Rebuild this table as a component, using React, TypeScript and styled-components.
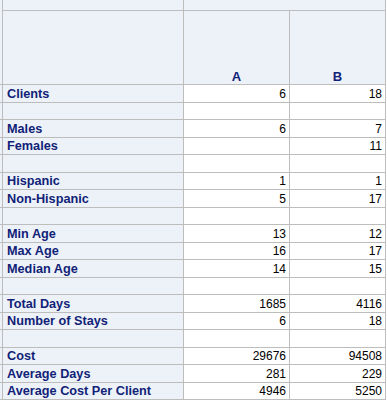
import React from 'react';
import styled, { createGlobalStyle } from 'styled-components';

const GlobalStyle = createGlobalStyle`
  html, body {
    margin: 0;
    padding: 0;
    background: #ffffff;
  }
  body {
    font-family: "Liberation Sans", Arial, sans-serif;
  }
`;

const Sheet = styled.div`
  display: grid;
  grid-template-columns: 2px 180px 105px 95px;
  grid-template-rows: 10px 73px repeat(18, 16.5px);
  gap: 1px;
  width: max-content;
  padding: 0 1px 1px 0;
  background: #bdbdbd;
`;

const Gutter = styled.div`
  background: #edf2f9;
`;

const Corner = styled.div`
  grid-row: 1 / span 2;
  background: #edf2f9;
`;

const SpanHeader = styled.div`
  grid-column: 3 / span 2;
  background: #edf2f9;
`;

const ColHeader = styled.div`
  display: flex;
  align-items: flex-end;
  justify-content: center;
  background: #edf2f9;
  color: #112277;
  font-size: 13px;
  font-weight: bold;
  line-height: 14px;
`;

const RowHeader = styled.div`
  display: flex;
  align-items: center;
  padding: 1px 0 0 4px;
  background: #edf2f9;
  color: #112277;
  font-size: 12.7px;
  font-weight: bold;
  white-space: nowrap;
`;

const Value = styled.div`
  display: flex;
  align-items: center;
  justify-content: flex-end;
  padding: 1px 3px 0 0;
  background: #ffffff;
  color: #000000;
  font-size: 12px;
`;

type Row = { label: string; a: string; b: string };

const rows: Row[] = [
  { label: 'Clients', a: '6', b: '18' },
  { label: '', a: '', b: '' },
  { label: 'Males', a: '6', b: '7' },
  { label: 'Females', a: '', b: '11' },
  { label: '', a: '', b: '' },
  { label: 'Hispanic', a: '1', b: '1' },
  { label: 'Non-Hispanic', a: '5', b: '17' },
  { label: '', a: '', b: '' },
  { label: 'Min Age', a: '13', b: '12' },
  { label: 'Max Age', a: '16', b: '17' },
  { label: 'Median Age', a: '14', b: '15' },
  { label: '', a: '', b: '' },
  { label: 'Total Days', a: '1685', b: '4116' },
  { label: 'Number of Stays', a: '6', b: '18' },
  { label: '', a: '', b: '' },
  { label: 'Cost', a: '29676', b: '94508' },
  { label: 'Average Days', a: '281', b: '229' },
  { label: 'Average Cost Per Client', a: '4946', b: '5250' },
];

export default function App() {
  return (
    <>
      <GlobalStyle />
      <Sheet>
        <Gutter />
        <Corner />
        <SpanHeader />
        <Gutter />
        <ColHeader>A</ColHeader>
        <ColHeader>B</ColHeader>
        {rows.map((row, i) => (
          <React.Fragment key={i}>
            <Gutter />
            <RowHeader>{row.label}</RowHeader>
            <Value>{row.a}</Value>
            <Value>{row.b}</Value>
          </React.Fragment>
        ))}
      </Sheet>
    </>
  );
}
